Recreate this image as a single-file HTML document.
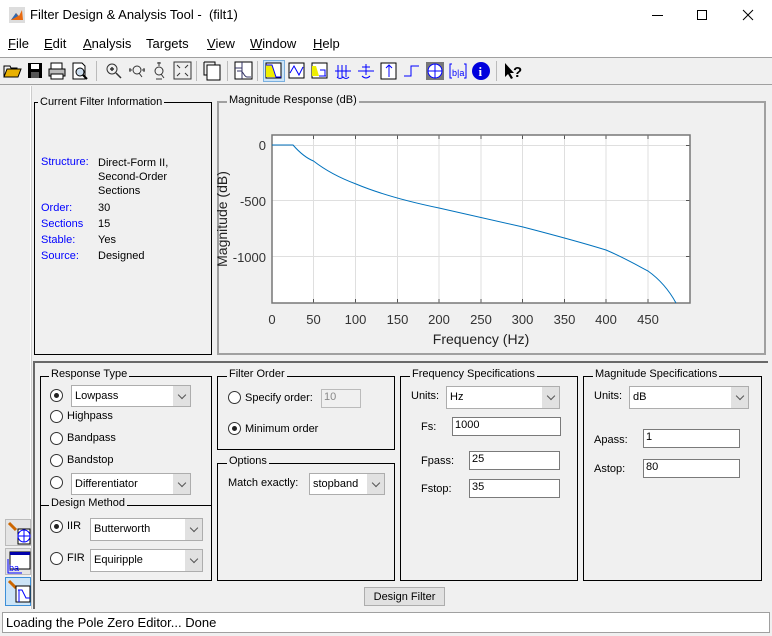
<!DOCTYPE html>
<html><head><meta charset="utf-8"><style>
*{box-sizing:border-box;margin:0;padding:0}
body{width:772px;height:636px;overflow:hidden;background:#f0f0f0;font-family:"Liberation Sans",sans-serif;font-size:11px;color:#000;position:relative}
.a{position:absolute}
.box{position:absolute;border:1px solid #000}
.lg{position:absolute;background:#f0f0f0;padding:0 2px;font-size:11px;white-space:nowrap}
.dd{position:absolute;background:#fff;border:1px solid #adadad;font-size:11px;padding:4px 0 0 3px}
.dd::after{content:"";position:absolute;right:0;top:0;width:17px;height:100%;background:#e1e1e1}
.dd i{position:absolute;right:5px;top:6px;width:6px;height:6px;border-right:1px solid #555;border-bottom:1px solid #555;transform:rotate(45deg);z-index:1}
.in{position:absolute;background:#fff;border:1px solid #7a7a7a;font-size:11px;padding:1px 0 0 2px}
.rb{position:absolute;width:13px;height:13px;border:1px solid #333;border-radius:50%;background:#fff}
.rb.on::after{content:"";position:absolute;left:3px;top:3px;width:5px;height:5px;border-radius:50%;background:#222}
.t{position:absolute;font-size:11px;white-space:nowrap}
.b{color:#00f}
.tb{position:absolute;top:61px;width:20px;height:20px}
</style></head><body>
<div class="a" style="left:0;top:0;width:772px;height:57px;background:#fff"></div>
<svg class="a" style="left:9px;top:7px" width="16" height="16"><rect width="16" height="16" fill="#ddd"/><path d="M2 13 L7 6 L10 9 L13 3 L14 13 Z" fill="#e86a10"/><path d="M2 13 L7 6 L9 9 Z" fill="#2a6bb8"/></svg>
<div class="t" style="left:30px;top:7px;font-size:13px">Filter Design &amp; Analysis Tool -&nbsp; (filt1)</div>
<div class="a" style="left:652px;top:15px;width:11px;height:1px;background:#000"></div>
<div class="a" style="left:697px;top:10px;width:10px;height:10px;border:1px solid #000"></div>
<svg class="a" style="left:742px;top:9px" width="12" height="12"><path d="M1 1 L11 11 M11 1 L1 11" stroke="#000"/></svg>
<div class="t" style="top:36px;left:8px;font-size:13px"><u>F</u>ile</div>
<div class="t" style="top:36px;left:44px;font-size:13px"><u>E</u>dit</div>
<div class="t" style="top:36px;left:83px;font-size:13px"><u>A</u>nalysis</div>
<div class="t" style="top:36px;left:146px;font-size:13px">Tar<u>g</u>ets</div>
<div class="t" style="top:36px;left:207px;font-size:13px"><u>V</u>iew</div>
<div class="t" style="top:36px;left:250px;font-size:13px"><u>W</u>indow</div>
<div class="t" style="top:36px;left:313px;font-size:13px"><u>H</u>elp</div>
<div class="a" style="left:0;top:57px;width:772px;height:1px;background:#a0a0a0"></div>
<div class="a" style="left:0;top:84px;width:772px;height:1px;background:#a0a0a0"></div>
<svg class="tb" style="left:3px"><path d="M1 16 L4 8 L18 8 L15 16 Z" fill="#e8b000" stroke="#000"/><path d="M1 16 V5 H7 L8 7 H14 V8" fill="none" stroke="#000"/></svg>
<svg class="tb" style="left:26px"><rect x="2" y="2" width="14" height="15" fill="#000"/><rect x="5" y="3" width="8" height="5" fill="#fff"/><rect x="5" y="11" width="8" height="6" fill="#555"/></svg>
<svg class="tb" style="left:48px"><rect x="3" y="2" width="11" height="6" fill="#fff" stroke="#000"/><rect x="1" y="8" width="16" height="7" fill="#bbb" stroke="#000"/><rect x="3" y="13" width="12" height="5" fill="#fff" stroke="#000"/></svg>
<svg class="tb" style="left:70px"><path d="M3 2 H12 L15 5 V18 H3 Z" fill="#fff" stroke="#000"/><circle cx="10" cy="11" r="4" fill="#cde" stroke="#000"/><path d="M13 14 L17 18" stroke="#000" stroke-width="2"/></svg>
<div class="a" style="left:96px;top:61px;width:1px;height:20px;background:#bbb"></div>
<svg class="tb" style="left:104px"><circle cx="8" cy="8" r="5" fill="none" stroke="#333"/><path d="M6 8 H10 M8 6 V10 M12 12 L17 17" stroke="#333" stroke-width="1.5"/></svg>
<svg class="tb" style="left:127px"><circle cx="10" cy="9" r="4" fill="none" stroke="#333"/><path d="M2 9 H5 M15 9 H18 M3 7 V11 M17 7 V11 M12 12 L15 16" stroke="#333"/></svg>
<svg class="tb" style="left:150px"><circle cx="9" cy="10" r="4" fill="none" stroke="#333"/><path d="M9 1 V5 M7 2 H11 M11 13 L14 17 M6 18 H12" stroke="#333"/></svg>
<svg class="tb" style="left:173px"><rect x="1" y="1" width="17" height="17" fill="#eee" stroke="#333"/><path d="M4 4 L7 7 M15 4 L12 7 M4 15 L7 12 M15 15 L12 12" stroke="#333"/></svg>
<div class="a" style="left:196px;top:61px;width:1px;height:20px;background:#bbb"></div>
<svg class="tb" style="left:203px"><rect x="4" y="4" width="13" height="15" fill="#fff" stroke="#000"/><path d="M1 1 H12 V4 M1 1 V14 H4" fill="none" stroke="#000"/></svg>
<div class="a" style="left:227px;top:61px;width:1px;height:20px;background:#bbb"></div>
<svg class="tb" style="left:234px"><rect x="1" y="1" width="17" height="17" fill="#fff" stroke="#000"/><path d="M1 7 H8 M8 1 V18 M3 10 H7 C9 10 10 16 13 16 H17" fill="none" stroke="#336"/></svg>
<div class="a" style="left:257px;top:61px;width:1px;height:20px;background:#bbb"></div>
<div class="a" style="left:263px;top:60px;width:22px;height:22px;background:#cce4f7;border:1px solid #7ab0e0"></div>
<svg class="tb" style="left:264px"><rect x="2" y="2" width="15" height="15" fill="#fff" stroke="#000"/><path d="M2 4 H8 L12 16 H2 Z" fill="#ee0"/><path d="M2 4 H8 L12 16 H17" fill="none" stroke="#00f"/></svg>
<svg class="tb" style="left:287px"><rect x="2" y="2" width="15" height="15" fill="#fff" stroke="#000"/><path d="M3 12 L7 5 L12 14 L16 6" fill="none" stroke="#00f"/></svg>
<svg class="tb" style="left:310px"><rect x="2" y="2" width="15" height="15" fill="#fff" stroke="#000"/><path d="M2 5 H6 L9 15 H2 Z" fill="#ee0"/><path d="M9 15 H16 M10 9 H15 V15" fill="none" stroke="#00f"/></svg>
<svg class="tb" style="left:333px"><path d="M2 10 H18 M5 4 V16 M9 4 V16 M13 4 V16 M4 16 Q7 19 10 16 Q13 19 16 16" fill="none" stroke="#00f"/></svg>
<svg class="tb" style="left:356px"><path d="M2 10 H18 M10 3 V14 M6 6 H14 M6 15 Q10 19 14 15" fill="none" stroke="#00f"/></svg>
<svg class="tb" style="left:379px"><rect x="2" y="2" width="15" height="16" fill="#fff" stroke="#000"/><path d="M10 16 V4 M7 7 L10 4 L13 7" fill="none" stroke="#00f"/></svg>
<svg class="tb" style="left:402px"><path d="M2 15 H9 V5 H17" fill="none" stroke="#00f"/></svg>
<svg class="tb" style="left:425px"><rect x="1" y="1" width="18" height="18" fill="#777"/><circle cx="10" cy="10" r="7" fill="#fff" stroke="#00f"/><path d="M3 10 H17 M10 3 V17" stroke="#00f"/></svg>
<svg class="tb" style="left:448px"><path d="M4 3 H2 V17 H4 M16 3 H18 V17 H16" fill="none" stroke="#00f"/><text x="4" y="15" font-size="9" fill="#00f" font-family="Liberation Sans">b|a</text></svg>
<svg class="tb" style="left:471px"><circle cx="10" cy="10" r="9" fill="#00d"/><text x="7.5" y="15" font-size="13" font-weight="bold" fill="#fff" font-family="Liberation Serif">i</text></svg>
<div class="a" style="left:496px;top:61px;width:1px;height:20px;background:#bbb"></div>
<svg class="tb" style="left:503px"><path d="M2 2 L2 16 L5 13 L8 18 L10 17 L7 12 L11 12 Z" fill="#000"/><text x="10" y="16" font-size="15" font-weight="bold" font-family="Liberation Sans">?</text></svg>
<div class="a" style="left:0;top:86px;width:32px;height:523px;border-right:1px solid #ccc"></div>
<div class="a" style="left:30px;top:86px;width:1px;height:523px;background:#fff"></div>
<div class="a" style="left:5px;top:519px;width:26px;height:27px;background:#e4e4e4;border:1px solid #bbb"></div>
<svg class="a" style="left:6px;top:520px" width="26" height="26"><path d="M3 3 L10 10" stroke="#c60" stroke-width="3"/><rect x="12" y="9" width="12" height="15" fill="#fff" stroke="#000"/><circle cx="18" cy="16" r="6" fill="#fff" stroke="#00f"/><path d="M12 16 H24 M18 10 V22" stroke="#00f"/></svg>
<div class="a" style="left:5px;top:548px;width:26px;height:27px;background:#e4e4e4;border:1px solid #bbb"></div>
<svg class="a" style="left:6px;top:549px" width="26" height="26"><rect x="4" y="3" width="20" height="17" fill="#fff" stroke="#000"/><rect x="4" y="3" width="20" height="3" fill="#00a"/><path d="M2 10 V24 H16" fill="none" stroke="#00f"/><text x="3" y="22" font-size="9" fill="#00f" font-family="Liberation Sans">ba</text></svg>
<div class="a" style="left:5px;top:577px;width:26px;height:29px;background:#cce4f7;border:1px solid #3c8fd8"></div>
<svg class="a" style="left:6px;top:578px" width="26" height="26"><path d="M3 3 L10 10" stroke="#c60" stroke-width="3"/><rect x="10" y="8" width="14" height="16" fill="#fff" stroke="#000"/><path d="M12 12 H16 L20 20 H24 M13 12 V24" fill="none" stroke="#00f"/></svg>
<div class="box" style="left:34px;top:102px;width:178px;height:253px"></div>
<div class="lg" style="left:38px;top:96px">Current Filter Information</div>
<div class="t b" style="left:41px;top:156px">Structure:</div><div class="t" style="left:98px;top:156px;line-height:14px">Direct-Form II,<br>Second-Order<br>Sections</div>
<div class="t b" style="left:41px;top:202px">Order:</div><div class="t" style="left:98px;top:202px">30</div>
<div class="t b" style="left:41px;top:218px">Sections</div><div class="t" style="left:98px;top:218px">15</div>
<div class="t b" style="left:41px;top:234px">Stable:</div><div class="t" style="left:98px;top:234px">Yes</div>
<div class="t b" style="left:41px;top:250px">Source:</div><div class="t" style="left:98px;top:250px">Designed</div>
<div class="a" style="left:217px;top:101px;width:549px;height:254px;border:2px solid #a0a0a0"></div>
<div class="lg" style="left:227px;top:94px">Magnitude Response (dB)</div>
<svg class="a" style="left:200px;top:120px" width="520" height="230">
<rect x="72" y="15" width="418" height="168" fill="#fff"/>
<g stroke="#dfdfdf"><path d="M113.5 15V183M155.5 15V183M197.5 15V183M239 15V183M281 15V183M322.5 15V183M364.5 15V183M406 15V183M448 15V183M72 25.5H490M72 80.5H490M72 136.5H490"/></g>
<g stroke="#555"><path d="M113.5 15v4M155.5 15v4M197.5 15v4M239 15v4M281 15v4M322.5 15v4M364.5 15v4M406 15v4M448 15v4M113.5 183v-4M155.5 183v-4M197.5 183v-4M239 183v-4M281 183v-4M322.5 183v-4M364.5 183v-4M406 183v-4M448 183v-4M486 25.5h4M486 80.5h4M486 136.5h4"/></g>
<rect x="72" y="15" width="418" height="168" fill="none" stroke="#777" stroke-width="1.5"/>
<path d="M72 25 L93 25 C100 33 106 38 113.5 41 C125 50 140 58 156 64 C180 74 210 82 239 88 C270 95 300 102 323 107 C350 114 380 122 406 130 C425 138 440 147 448 151 C462 161 470 172 476 183" fill="none" stroke="#0072bd"/>
<g font-family="Liberation Sans" font-size="13" fill="#333">
<text x="66" y="30" text-anchor="end">0</text><text x="66" y="86" text-anchor="end">-500</text><text x="66" y="142" text-anchor="end">-1000</text>
<text x="72" y="204" text-anchor="middle">0</text><text x="113.5" y="204" text-anchor="middle">50</text><text x="155.5" y="204" text-anchor="middle">100</text><text x="197.5" y="204" text-anchor="middle">150</text><text x="239" y="204" text-anchor="middle">200</text><text x="281" y="204" text-anchor="middle">250</text><text x="322.5" y="204" text-anchor="middle">300</text><text x="364.5" y="204" text-anchor="middle">350</text><text x="406" y="204" text-anchor="middle">400</text><text x="448" y="204" text-anchor="middle">450</text>
<text x="281" y="224" text-anchor="middle" font-size="14" fill="#222">Frequency (Hz)</text>
<text transform="translate(27 99) rotate(-90)" text-anchor="middle" font-size="14" fill="#222">Magnitude (dB)</text>
</g></svg>
<div class="a" style="left:33px;top:361px;width:735px;height:2px;background:#696969"></div>
<div class="a" style="left:33px;top:361px;width:2px;height:248px;background:#696969"></div>
<div class="box" style="left:40px;top:376px;width:172px;height:205px"></div>
<div class="a" style="left:40px;top:505px;width:172px;height:1px;background:#000"></div>
<div class="lg" style="left:49px;top:368px">Response Type</div>
<div class="rb on" style="left:50px;top:389px"></div><div class="dd" style="left:71px;top:385px;width:120px;height:22px">Lowpass<i></i></div>
<div class="rb" style="left:50px;top:410px"></div><div class="t" style="left:67px;top:410px">Highpass</div>
<div class="rb" style="left:50px;top:432px"></div><div class="t" style="left:67px;top:432px">Bandpass</div>
<div class="rb" style="left:50px;top:454px"></div><div class="t" style="left:67px;top:454px">Bandstop</div>
<div class="rb" style="left:50px;top:476px"></div><div class="dd" style="left:71px;top:473px;width:120px;height:22px">Differentiator<i></i></div>
<div class="lg" style="left:49px;top:497px">Design Method</div>
<div class="rb on" style="left:50px;top:520px"></div><div class="t" style="left:67px;top:520px">IIR</div><div class="dd" style="left:90px;top:518px;width:113px;height:23px">Butterworth<i></i></div>
<div class="rb" style="left:50px;top:552px"></div><div class="t" style="left:67px;top:552px">FIR</div><div class="dd" style="left:90px;top:549px;width:113px;height:23px">Equiripple<i></i></div>
<div class="box" style="left:217px;top:376px;width:178px;height:74px"></div>
<div class="lg" style="left:227px;top:368px">Filter Order</div>
<div class="rb" style="left:228px;top:391px"></div><div class="t" style="left:245px;top:392px">Specify order:</div>
<div class="in" style="left:321px;top:389px;width:40px;height:19px;border-color:#bbb;background:#f0f0f0;color:#888">10</div>
<div class="rb on" style="left:228px;top:422px"></div><div class="t" style="left:245px;top:423px">Minimum order</div>
<div class="box" style="left:217px;top:463px;width:178px;height:118px"></div>
<div class="lg" style="left:227px;top:455px">Options</div>
<div class="t" style="left:228px;top:477px">Match exactly:</div>
<div class="dd" style="left:309px;top:473px;width:76px;height:22px">stopband<i></i></div>
<div class="box" style="left:400px;top:376px;width:178px;height:205px"></div>
<div class="lg" style="left:410px;top:368px">Frequency Specifications</div>
<div class="t" style="left:411px;top:390px">Units:</div>
<div class="dd" style="left:446px;top:386px;width:114px;height:23px">Hz<i></i></div>
<div class="t" style="left:421px;top:421px">Fs:</div><div class="in" style="left:452px;top:417px;width:109px;height:19px">1000</div>
<div class="t" style="left:421px;top:455px">Fpass:</div><div class="in" style="left:469px;top:451px;width:91px;height:19px">25</div>
<div class="t" style="left:421px;top:483px">Fstop:</div><div class="in" style="left:469px;top:479px;width:91px;height:19px">35</div>
<div class="box" style="left:583px;top:376px;width:179px;height:205px"></div>
<div class="lg" style="left:593px;top:368px">Magnitude Specifications</div>
<div class="t" style="left:594px;top:390px">Units:</div>
<div class="dd" style="left:629px;top:386px;width:120px;height:23px">dB<i></i></div>
<div class="t" style="left:594px;top:434px">Apass:</div><div class="in" style="left:643px;top:429px;width:97px;height:19px">1</div>
<div class="t" style="left:594px;top:463px">Astop:</div><div class="in" style="left:643px;top:459px;width:97px;height:19px">80</div>
<div class="a" style="left:364px;top:587px;width:81px;height:19px;background:#e1e1e1;border:1px solid #adadad;text-align:center;padding-top:3px">Design Filter</div>
<div class="a" style="left:2px;top:612px;width:768px;height:21px;background:#fff;border:1px solid #a0a0a0;font-size:13px;padding:2px 0 0 3px">Loading the Pole Zero Editor... Done</div>
</body></html>
